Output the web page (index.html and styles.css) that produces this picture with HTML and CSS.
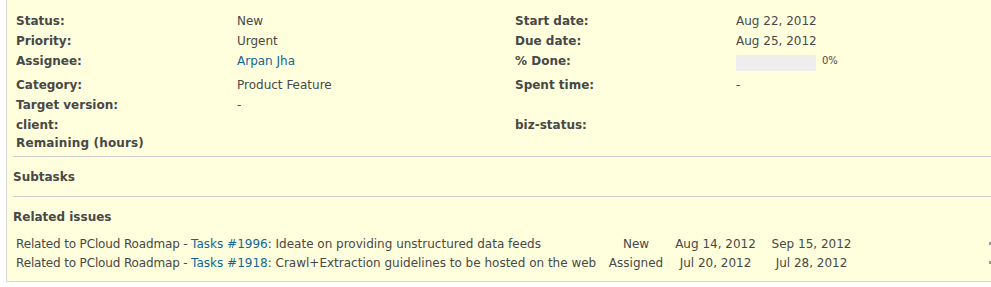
FILE: index.html
```html
<!DOCTYPE html>
<html>
<head>
<meta charset="utf-8">
<link rel="stylesheet" href="styles.css">
</head>
<body>
<div class="issue">
  <div class="attributes">
    <div class="row">
      <div class="th">Status:</div><div class="td">New</div>
      <div class="th">Start date:</div><div class="td">Aug 22, 2012</div>
    </div>
    <div class="row">
      <div class="th">Priority:</div><div class="td">Urgent</div>
      <div class="th">Due date:</div><div class="td">Aug 25, 2012</div>
    </div>
    <div class="row row-progress">
      <div class="th">Assignee:</div><div class="td"><a href="#" class="link">Arpan Jha</a></div>
      <div class="th">% Done:</div>
      <div class="td progress-cell"><span class="bar"></span><span class="pct">0%</span></div>
    </div>
    <div class="row">
      <div class="th">Category:</div><div class="td">Product Feature</div>
      <div class="th">Spent time:</div><div class="td">-</div>
    </div>
    <div class="row">
      <div class="th">Target version:</div><div class="td">-</div>
      <div class="th"></div><div class="td"></div>
    </div>
    <div class="row row-short">
      <div class="th">client:</div><div class="td"></div>
      <div class="th">biz-status:</div><div class="td"></div>
    </div>
    <div class="row">
      <div class="th th-wide">Remaining (hours)</div><div class="td"></div>
      <div class="th"></div><div class="td"></div>
    </div>
  </div>

  <div class="section section-subtasks">
    <p class="heading">Subtasks</p>
  </div>

  <div class="section section-relations">
    <p class="heading">Related issues</p>
    <div class="relations">
      <div class="rel-row">
        <div class="subject"><span class="rel-prefix">Related to PCloud Roadmap - </span><a href="#" class="link">Tasks #1996</a>: Ideate on providing unstructured data feeds</div>
        <div class="status">New</div>
        <div class="date">Aug 14, 2012</div>
        <div class="date">Sep 15, 2012</div>
        <div class="buttons"><span class="del"></span></div>
      </div>
      <div class="rel-row">
        <div class="subject"><span class="rel-prefix">Related to PCloud Roadmap - </span><a href="#" class="link">Tasks #1918</a>: Crawl+Extraction guidelines to be hosted on the web</div>
        <div class="status">Assigned</div>
        <div class="date">Jul 20, 2012</div>
        <div class="date">Jul 28, 2012</div>
        <div class="buttons"><span class="del"></span></div>
      </div>
    </div>
  </div>
</div>
</body>
</html>
```

FILE: styles.css
```css
html, body {
  margin: 0;
  padding: 0;
  background: #ffffff;
  overflow: hidden;
}

body {
  font-family: "DejaVu Sans", Verdana, sans-serif;
  font-size: 12px;
  color: #484848;
}

.issue {
  margin-left: 6px;
  width: 1020px;
  background: #ffffdd;
  border: 1px solid #d7d7d7;
  border-top: none;
  padding: 11px 6px 8px 6px;
}

.link {
  color: #116699;
  text-decoration: none;
}

.attributes {
  display: flex;
  flex-direction: column;
  padding-bottom: 3px;
}

.row {
  display: grid;
  grid-template-columns: 221px 278px 221px 1fr;
  height: 20px;
  line-height: 20px;
}

.row-progress {
  height: 24px;
}

.row-short {
  height: 18px;
}

.th {
  font-weight: bold;
  padding-left: 3px;
  white-space: nowrap;
}

.th-wide {
  letter-spacing: 0.15px;
}

.td {
  padding-left: 3px;
  white-space: nowrap;
}

.progress-cell {
  display: flex;
  align-items: flex-start;
}

.bar {
  display: block;
  width: 80px;
  height: 16px;
  margin-top: 4px;
  background: #eeeeee;
}

.pct {
  font-size: 10px;
  margin-left: 6px;
}

.section {
  border-top: 1px solid #cccccc;
  padding-top: 10px;
}

.section-subtasks {
  padding-bottom: 9px;
}

.heading {
  margin: 0;
  font-weight: bold;
  line-height: 20px;
}

.relations {
  margin-top: 8px;
}

.rel-row {
  display: grid;
  grid-template-columns: 591px 64px 95px 97px 1fr;
  height: 19px;
  line-height: 19px;
  white-space: nowrap;
}

.subject {
  padding-left: 3px;
}

.rel-prefix {
  letter-spacing: -0.15px;
}

.status,
.date {
  text-align: center;
}

.buttons {
  padding-left: 129px;
  display: flex;
  align-items: center;
}

.del {
  display: block;
  width: 2px;
  height: 3px;
  background: #9a9a9a;
  margin-top: -3px;
}
```
